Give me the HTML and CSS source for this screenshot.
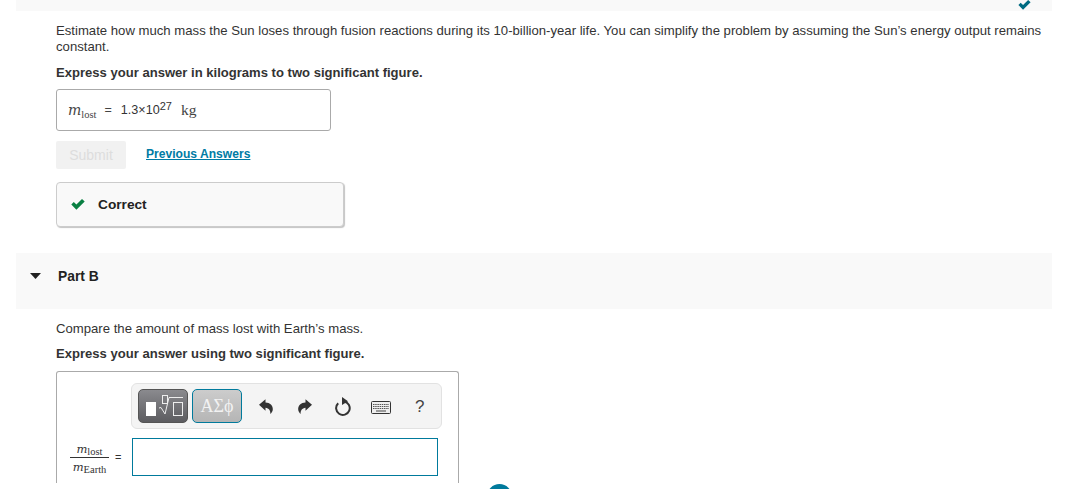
FILE: index.html
```
<!DOCTYPE html>
<html lang="en">
<head>
<meta charset="utf-8">
<title>Part A and Part B</title>
<link rel="stylesheet" href="styles.css">
</head>
<body>
<div class="page">
  <div class="part-bar-top">
    <svg class="top-check" viewBox="0 0 14 11" width="13" height="10"><path d="M0.3 5.500 L2.800 3 L5.400 5.600 L11 0 L13.700 2.500 L5.400 10.800 Z" fill="#006b82"/></svg>
  </div>
  <div class="content first">
    <p class="prompt">Estimate how much mass the Sun loses through fusion reactions during its 10-billion-year life. You can simplify the problem by assuming the Sun’s energy output remains constant.</p>
    <p class="instruction first-inst">Express your answer in kilograms to two significant figure.</p>
    <div class="answer-box">
      <span class="math"><i>m</i><sub>lost</sub></span>
      <span class="eq">=</span>
      <span class="value">1.3×10<sup>27</sup></span>
      <span class="unit">kg</span>
    </div>
    <div class="actions">
      <button class="submit" disabled>Submit</button>
      <a class="prev" href="#">Previous Answers</a>
    </div>
    <div class="feedback">
      <svg class="correct-check" viewBox="0 0 14 11" width="14" height="11"><path d="M0.300 5.500 L2.800 3 L5.400 5.600 L11 0 L13.700 2.500 L5.400 10.800 Z" fill="#0a8043"/></svg>
      <span>Correct</span>
    </div>
  </div>
  <div class="part-header">
    <svg class="caret" viewBox="0 0 11 6" width="11" height="6"><path d="M0 0 H11 L5.500 6 Z" fill="#222"/></svg>
    <span>Part B</span>
  </div>
  <div class="content second">
    <p class="prompt">Compare the amount of mass lost with Earth’s mass.</p>
    <p class="instruction second-inst">Express your answer using two significant figure.</p>
    <div class="editor">
      <div class="toolbar">
        <div class="tool-btn templates">
          <svg viewBox="0 0 50 34" width="50" height="34">
            <rect x="8" y="13" width="10" height="14" fill="#fff"/>
            <rect x="24.500" y="6.500" width="5" height="8" fill="none" stroke="#eee" stroke-width="1"/>
            <path d="M21 19 L23 18.500 L27 25 L31 8.500 H45" fill="none" stroke="#eee" stroke-width="1"/>
            <rect x="35.500" y="13.500" width="9" height="13" fill="none" stroke="#eee" stroke-width="1"/>
          </svg>
        </div>
        <div class="tool-btn symbols">ΑΣϕ</div>
        <svg class="icon undo" viewBox="0 0 14 15" width="14" height="15"><path d="M0 5.800 L6.500 0.300 V3.500 C11 3.700 14 6.500 13.800 10.500 C13.700 12 12.900 13.800 11.300 15 C11.700 11.800 10 9 6.500 8.700 V11.800 Z" fill="#333"/></svg>
        <svg class="icon redo" viewBox="0 0 14 15" width="14" height="15"><path d="M14 5.800 L7.500 0.300 V3.500 C3 3.700 0 6.500 0.200 10.500 C0.300 12 1.100 13.800 2.700 15 C2.300 11.800 4 9 7.500 8.700 V11.800 Z" fill="#333"/></svg>
        <svg class="icon reset" viewBox="0 0 16 19" width="16" height="19"><path d="M3.200 6.200 A6.800 6.800 0 1 0 9 4.400" fill="none" stroke="#333" stroke-width="2"/><path d="M7 0 L13 4.200 L7 8 Z" fill="#333"/></svg>
        <svg class="icon keyboard" viewBox="0 0 20 13" width="20" height="13"><rect x="0.500" y="0.500" width="19" height="12" rx="1" fill="#eee" stroke="#333"/><path d="M2 3.500 H18 M2 5.500 H18 M2 7.500 H18" stroke="#555" stroke-width="1" stroke-dasharray="1.500 0.700"/><path d="M5 10 H15" stroke="#444" stroke-width="1"/></svg>
        <span class="help">?</span>
      </div>
      <div class="formula">
        <div class="fraction">
          <span class="num"><i>m</i><sub>lost</sub></span>
          <span class="den"><i>m</i><sub>Earth</sub></span>
        </div>
        <span class="eq">=</span>
        <div class="input"></div>
      </div>
    </div>
  </div>
  <div class="blue-dot"></div>
</div>
</body>
</html>
```

FILE: styles.css
```
* { box-sizing: border-box; }
html, body { margin: 0; padding: 0; background: #fff; }
body { font-family: "Liberation Sans", Arial, sans-serif; color: #333; overflow: hidden; }
.page { position: relative; width: 1071px; height: 489px; overflow: hidden; padding: 0 19px 0 16px; }
p { margin: 0; }

.part-bar-top { height: 11px; background: #f9f9f9; display: flex; justify-content: flex-end; padding-right: 21px; }
.top-check { display: block; }

.content { padding-left: 40px; padding-right: 10px; }
.content.first { padding-top: 12px; height: 242px; }
.prompt { font-size: 13.15px; line-height: 16px; color: #333; }
.instruction { font-size: 13.07px; line-height: 16px; font-weight: bold; color: #333; }
.first-inst { margin-top: 10px; }

.answer-box { width: 275px; height: 42px; margin-top: 8px; border: 1px solid #aaa; border-radius: 3px; display: flex; align-items: center; padding-left: 11px; font-size: 12.6px; }
.math { font-family: "Liberation Serif", serif; color: #444; }
.math i { font-family: "DejaVu Serif", serif; font-size: 14px; }
.math sub { font-size: 10.5px; font-style: normal; line-height: 0; vertical-align: -3px; }
.answer-box .eq { font-size: 12.5px; margin: 0 9px 0 8px; color: #444; }
.value sup { font-size: 11px; line-height: 0; vertical-align: 4px; }
.unit { font-family: "Liberation Serif", serif; font-size: 15.5px; margin-left: 9px; color: #444; }

.actions { display: flex; margin-top: 10px; align-items: flex-start; }
.submit { width: 70px; height: 28px; background: #f1f1f1; color: #ddd; border: 0; border-radius: 2px; font: 14px "Liberation Sans", sans-serif; padding: 0; }
.prev { margin: 5px 0 0 20px; font-size: 12.1px; line-height: 16px; font-weight: bold; color: #007ba4; text-decoration: underline; }

.feedback { width: 288px; height: 45px; margin-top: 13px; display: flex; align-items: center; background: #f9f9f9; border: 1px solid #ccc; border-radius: 4px; box-shadow: 1px 1px 1px #c4c4c4; padding-left: 14px; gap: 13px; font-size: 13.7px; font-weight: bold; color: #222; }

.part-header { height: 56px; background: #f9f9f9; display: flex; align-items: center; gap: 17px; padding: 0 0 10px 14px; font-size: 13.8px; font-weight: bold; color: #222; }

.content.second { padding-top: 12px; }
.second-inst { margin-top: 9px; }

.editor { width: 403px; height: 112px; margin-top: 9px; border: 1px solid #aaa; border-bottom: 0; border-radius: 3px 3px 0 0; padding: 11px 0 0 13px; }
.toolbar { width: 311px; height: 46px; margin-left: 61px; background: #f4f4f4; border: 1px solid #e2e2e2; border-radius: 6px; display: flex; align-items: center; padding-left: 6px; }
.tool-btn { width: 50px; height: 34px; border-radius: 5px; }
.templates { background: linear-gradient(#8a8a8e, #5c5c60); border: 1px solid #555; }
.templates svg { display: block; margin: -1px; }
.symbols { margin-left: 4px; background: linear-gradient(#cccccc, #b5b5b5); border: 1px solid #007a9c; color: #f2f2f2; font: 18px/32px "Liberation Serif", serif; text-align: center; }
.icon { flex: none; }
.undo { margin-left: 17px; }
.redo { margin-left: 25px; }
.reset { margin-left: 23px; }
.keyboard { margin-left: 20px; margin-top: 2px; }
.help { margin: 2px 0 0 24px; font-size: 17px; color: #444; }

.formula { display: flex; align-items: center; margin-top: 9px; }
.fraction { width: 39px; display: flex; flex-direction: column; align-items: center; font-family: "Liberation Serif", serif; color: #333; margin-right: 6px; }
.fraction i { font-family: "DejaVu Serif", serif; font-size: 11.5px; }
.num { border-bottom: 1px solid #333; width: 100%; text-align: center; padding-bottom: 1px; line-height: 13px; }
.den { padding-top: 1px; line-height: 13px; white-space: nowrap; }
.num sub, .den sub { font-size: 10.5px; font-style: normal; line-height: 0; vertical-align: -2px; }
.formula .eq { width: 8px; margin: 0 9px 0 0; font-size: 11px; }
.input { width: 306px; height: 38px; border: 1px solid #007a9c; background: #fff; }

.blue-dot { position: absolute; left: 487px; top: 484px; width: 25px; height: 25px; border-radius: 50%; background: #007a9c; }
```
